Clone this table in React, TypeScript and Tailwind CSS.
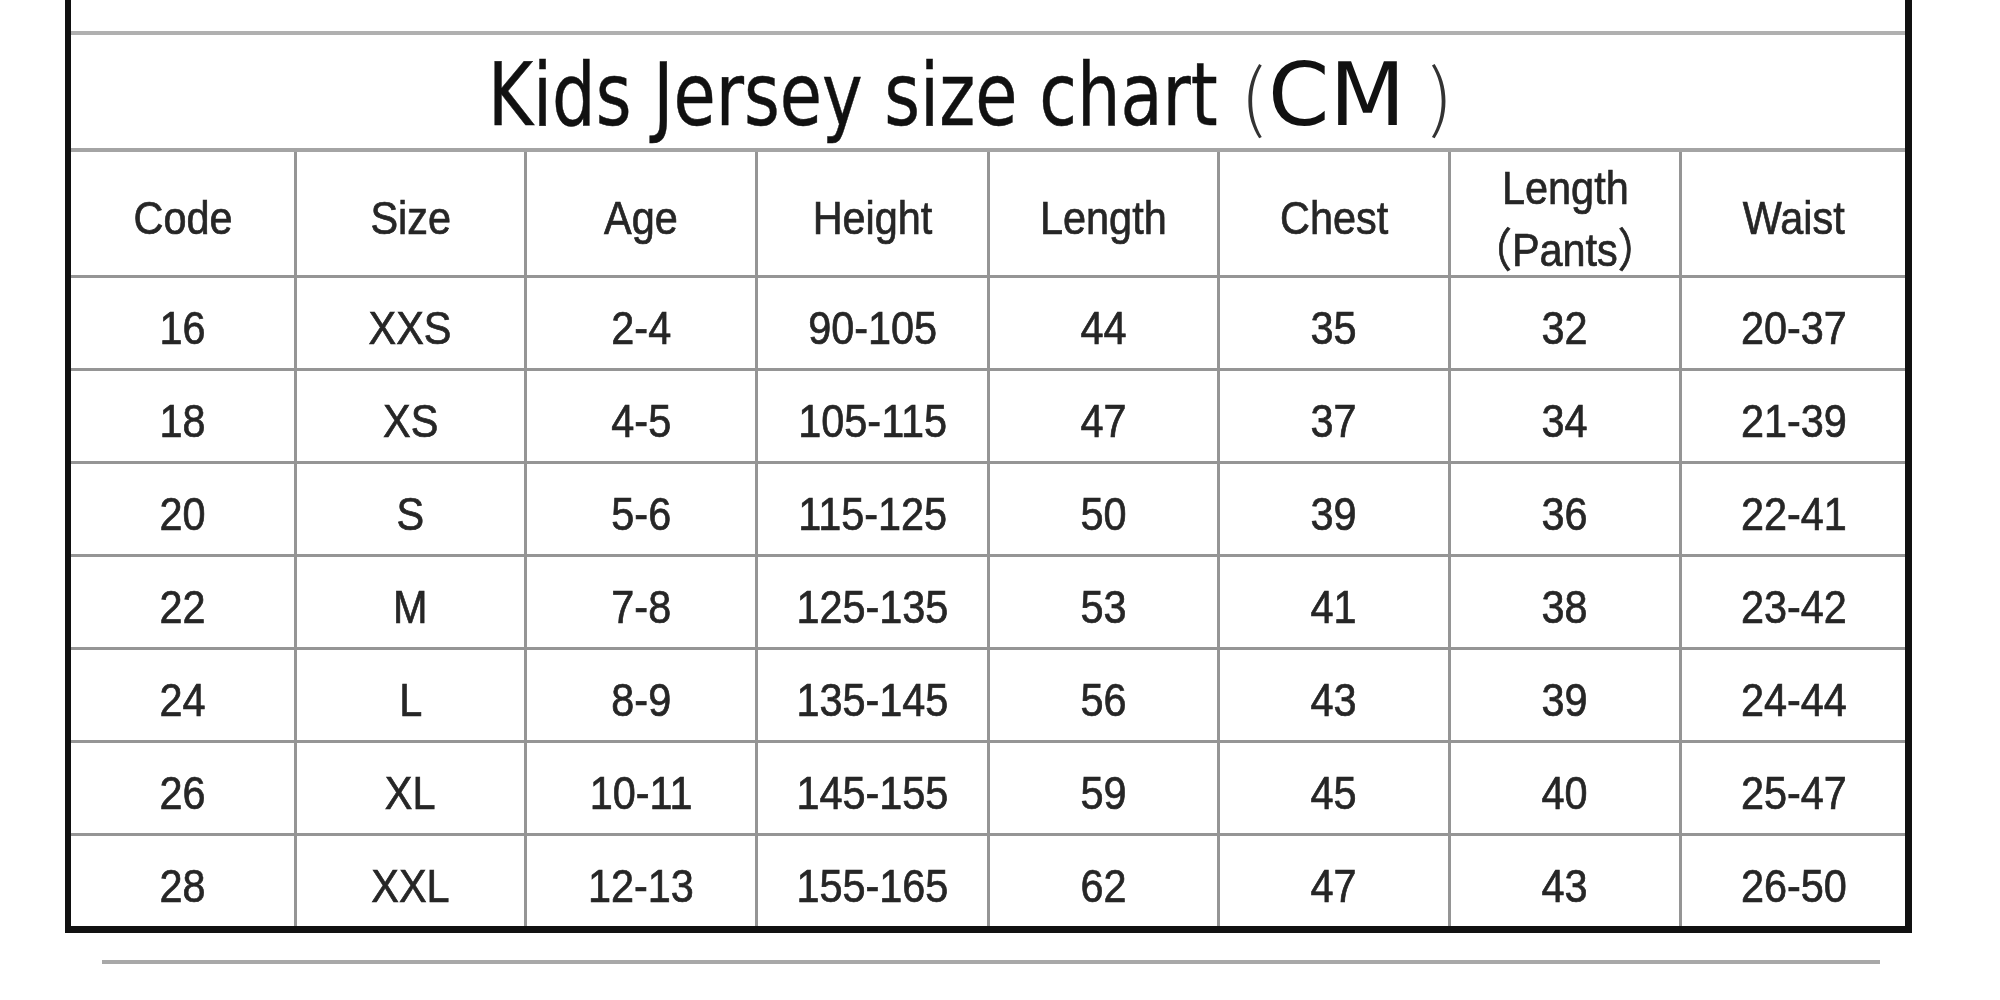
const columns = ["Code", "Size", "Age", "Height", "Length", "Chest", "Length（Pants）", "Waist"];

const rows = [
  ["16", "XXS", "2-4", "90-105", "44", "35", "32", "20-37"],
  ["18", "XS", "4-5", "105-115", "47", "37", "34", "21-39"],
  ["20", "S", "5-6", "115-125", "50", "39", "36", "22-41"],
  ["22", "M", "7-8", "125-135", "53", "41", "38", "23-42"],
  ["24", "L", "8-9", "135-145", "56", "43", "39", "24-44"],
  ["26", "XL", "10-11", "145-155", "59", "45", "40", "25-47"],
  ["28", "XXL", "12-13", "155-165", "62", "47", "43", "26-50"],
];

const cellFont = "[font-family:'Liberation_Sans','Noto_Sans_CJK_SC',sans-serif]";
const ink = "text-[#262626] [-webkit-text-stroke:0.7px_#262626]";

function HeaderCell({ label }: { label: string }) {
  if (label === "Length（Pants）") {
    return (
      <div className={`h-[123px] bg-white flex flex-col items-center justify-center pt-[10px] text-[46px] leading-[62px] ${ink}`}>
        <span className="inline-block scale-x-90">Length</span>
        <span className="inline-block scale-x-90">（Pants）</span>
      </div>
    );
  }
  return (
    <div className={`h-[123px] bg-white flex items-center justify-center pt-[8px] text-[46px] leading-none ${ink}`}>
      <span className="inline-block scale-x-90">{label}</span>
    </div>
  );
}

function Title() {
  return (
    <div className="h-[113px] flex items-center pt-[6px] text-[88px] leading-none text-[#111] whitespace-nowrap [font-family:'DejaVu_Sans','Noto_Sans_CJK_SC',sans-serif]">
      <div className="w-[417px] shrink-0" />
      <div className="w-[750px] shrink-0">
        <span className="inline-block scale-x-[0.78] origin-left [-webkit-text-stroke:0.5px_#111]">
          Kids Jersey size chart
        </span>
      </div>
      <div className="w-[30px] shrink-0 flex justify-center text-[74px] text-[#333] font-light -translate-y-[3px] [font-family:'Noto_Sans_CJK_SC',sans-serif]">(</div>
      <div className="w-[158px] shrink-0">CM</div>
      <div className="w-[30px] shrink-0 flex justify-center text-[74px] text-[#333] font-light -translate-y-[3px] [font-family:'Noto_Sans_CJK_SC',sans-serif]">)</div>
    </div>
  );
}

export default function App() {
  return (
    <div className="w-[2000px] h-[1000px] bg-white overflow-hidden blur-[0.6px]">
      <div className="ml-[65px] w-[1847px] border-l-[6px] border-r-[7px] border-b-[7px] border-[#111]">
        <div className="h-[31px]" />
        <div className="h-[4px] bg-[#b0b0b0]" />
        <Title />
        <div className="h-[4px] bg-[#a4a4a4]" />
        <div
          className={`grid grid-cols-[223px_227px_228px_229px_227px_228px_228px_223px] gap-[3px] bg-[#959595] ${cellFont}`}
        >
          {columns.map((c) => (
            <HeaderCell key={c} label={c} />
          ))}
          {rows.map((row, i) =>
            row.map((v, j) => (
              <div
                key={`${i}-${j}`}
                className={`h-[90px] bg-white flex items-center justify-center pt-[10px] text-[46px] leading-none ${ink}`}
              >
                <span className="inline-block scale-x-90">{v}</span>
              </div>
            ))
          )}
        </div>
      </div>
      <div className="ml-[102px] mt-[27px] w-[1778px] h-[4px] bg-[#a8a8a8]" />
    </div>
  );
}
